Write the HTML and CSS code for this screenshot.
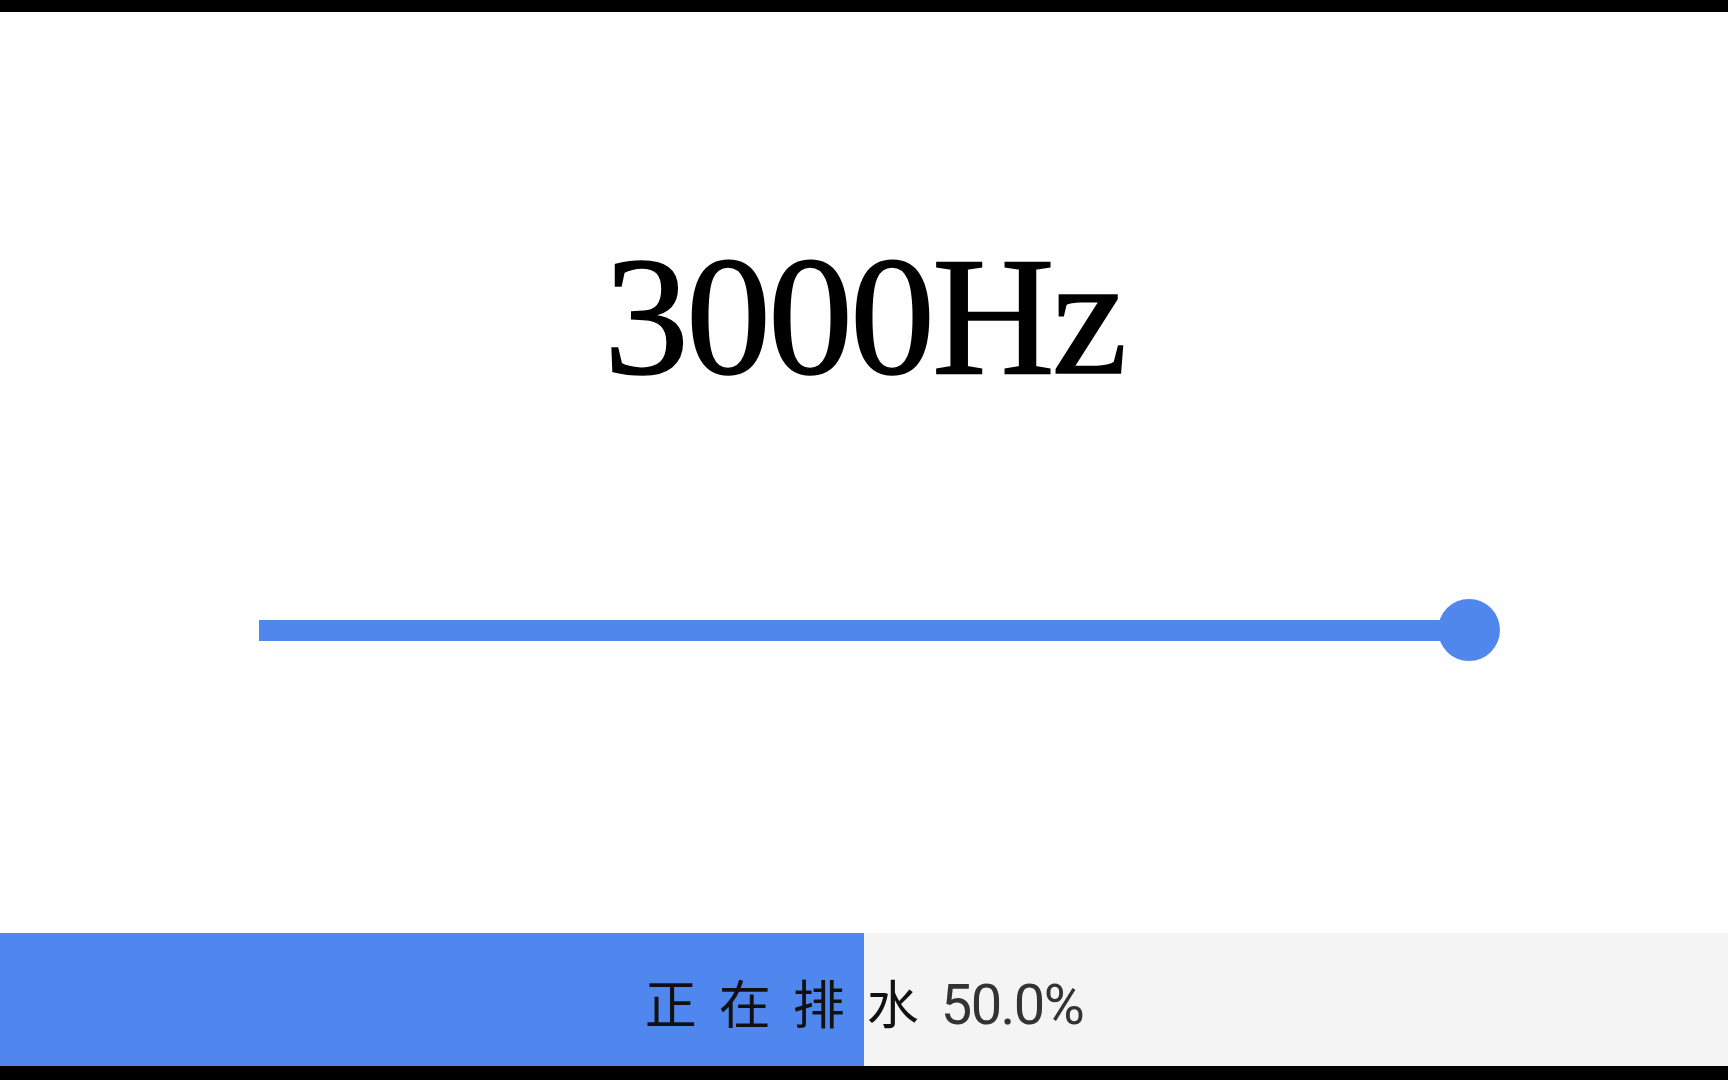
FILE: index.html
```html
<!DOCTYPE html>
<html lang="zh">
<head>
<meta charset="utf-8">
<title>3000Hz</title>
<link rel="stylesheet" href="styles.css">
</head>
<body>
<div class="screen">
  <div class="topbar"></div>
  <main class="app">
    <div class="freq">3000Hz</div>
    <div class="slider">
      <div class="track"></div>
      <div class="thumb"></div>
    </div>
  </main>
  <div class="progress">
    <div class="fill" style="width:50%"></div>
    <div class="label"><span class="cjk">正在排水</span><span class="pct">50.0%</span></div>
  </div>
  <div class="bottombar"></div>
</div>
</body>
</html>
```
FILE: styles.css
```css
html, body {
  margin: 0;
  padding: 0;
  background: #000;
}
.screen {
  width: 1728px;
  height: 1080px;
  display: flex;
  flex-direction: column;
  overflow: hidden;
}
.topbar {
  height: 12px;
  background: #000;
  flex: none;
}
.app {
  height: 921px;
  flex: none;
  background: #fefefe;
  display: flex;
  flex-direction: column;
  align-items: center;
  padding-top: 209px;
  box-sizing: border-box;
}
.freq {
  font-family: "Liberation Serif", "DejaVu Serif", serif;
  font-size: 170px;
  line-height: 190px;
  letter-spacing: -3px;
  -webkit-text-stroke: 1.5px #000;
  color: #000;
  text-align: center;
}
.slider {
  margin-top: 188px;
  width: 70%;
  height: 62px;
  position: relative;
  display: flex;
  align-items: center;
}
.track {
  width: 100%;
  height: 21px;
  background: #4f87ec;
}
.thumb {
  position: absolute;
  right: -31px;
  top: 0;
  width: 62px;
  height: 62px;
  border-radius: 50%;
  background: #4f87ec;
}
.progress {
  height: 133px;
  flex: none;
  background: #f4f4f4;
  position: relative;
  display: flex;
  align-items: center;
  justify-content: center;
}
.fill {
  position: absolute;
  left: 0;
  top: 0;
  bottom: 0;
  background: #4f87ee;
}
.label {
  position: relative;
  font-family: Roboto, "Noto Sans CJK SC", sans-serif;
  font-size: 56px;
  line-height: 60px;
  color: #1a1a1a;
  padding-top: 8px;
  white-space: nowrap;
}
.cjk {
  font-family: "Noto Sans CJK SC", sans-serif;
  font-size: 52px;
  letter-spacing: 22px;
  font-weight: 400;
  color: #111;
}
.pct {
  color: #333;
  letter-spacing: -1.5px;
}
.bottombar {
  height: 14px;
  flex: none;
  background: #000;
}
```
